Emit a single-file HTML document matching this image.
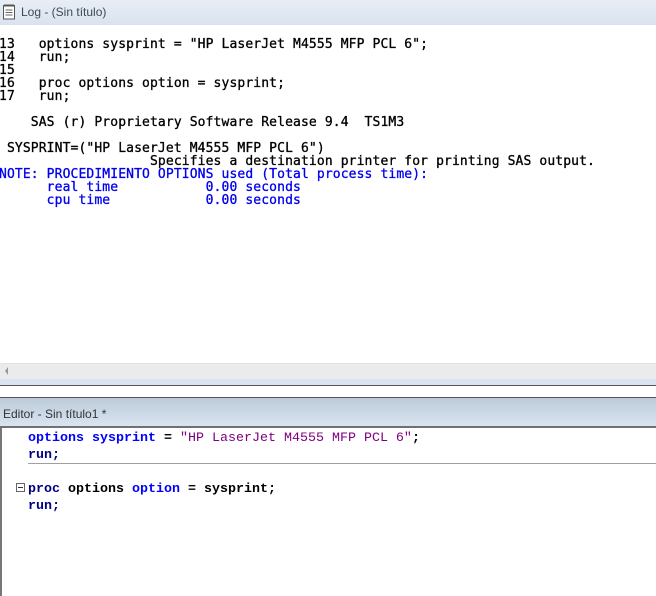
<!DOCTYPE html>
<html><head><meta charset="utf-8"><style>
*{margin:0;padding:0;box-sizing:border-box}
body{width:656px;height:596px;position:relative;background:#fff;overflow:hidden;font-family:"Liberation Sans",sans-serif}
.t{position:absolute;left:0;width:656px;background:linear-gradient(#eef2f7,#d6e2ef);color:#3c4a5a;font-size:12px}
.l{position:absolute;white-space:pre;font-family:"DejaVu Sans Mono",monospace;font-size:13px;letter-spacing:0.12px;line-height:13px;color:#000;-webkit-text-stroke:0.3px #000}
.b{color:#0000ee;-webkit-text-stroke:0.3px #0000ee}
.e{position:absolute;white-space:pre;font-family:"Liberation Mono","Courier New",monospace;font-size:13.33px;line-height:17px;color:#000;font-weight:bold}
.k{color:#0000ff}
.s{color:#800080;font-weight:normal}
.n{color:#000080}
</style></head><body>
<div class="t" style="top:0;height:25px;background:linear-gradient(#e9eef5,#d9e3ef)">
<svg style="position:absolute;left:2px;top:3px" width="14" height="17" viewBox="0 0 14 17"><rect x="1.5" y="2.5" width="11" height="13.5" fill="#fff" stroke="#555"/><path d="M3 1v3M5 1v3M7 1v3M9 1v3M11 1v3" stroke="#555"/><path d="M3.5 7h7M3.5 9.5h7M3.5 12h7" stroke="#666"/></svg>
<span style="position:absolute;left:21px;top:5px">Log - (Sin título)</span></div>
<div class="l" style="left:-1px;top:38px">13   options sysprint = "HP LaserJet M4555 MFP PCL 6";
14   run;
15
16   proc options option = sysprint;
17   run;</div>
<div class="l" style="left:-1px;top:116px">    SAS (r) Proprietary Software Release 9.4  TS1M3</div>
<div class="l" style="left:-1px;top:142px"> SYSPRINT=("HP LaserJet M4555 MFP PCL 6")
                   Specifies a destination printer for printing SAS output.
<span class="b">NOTE: PROCEDIMIENTO OPTIONS used (Total process time):
      real time           0.00 seconds
      cpu time            0.00 seconds</span></div>
<div style="position:absolute;left:0;top:363px;width:656px;height:16px;background:#ebebeb;border-top:1px solid #e2e2e2"></div>
<div style="position:absolute;left:5px;top:367px;width:0;height:0;border-top:4px solid transparent;border-bottom:4px solid transparent;border-right:3px solid #999"></div>
<div style="position:absolute;left:0;top:379px;width:656px;height:7px;background:#d9e4f0;border-bottom:1px solid #555"></div>
<div style="position:absolute;left:0;top:397px;width:656px;height:1px;background:#555"></div>
<div class="t" style="top:398px;height:30px;background:linear-gradient(#bccad8,#d8e4f0);border-bottom:2px solid #707070"><span style="position:absolute;left:3px;top:9px;color:#333">Editor - Sin título1 *</span></div>
<div style="position:absolute;left:0;top:428px;width:2px;height:168px;background:#777"></div>
<div class="e" style="left:28px;top:430px"><span class="k">options sysprint</span> = <span class="s">"HP LaserJet M4555 MFP PCL 6"</span>;
<span class="n">run;</span></div>
<div style="position:absolute;left:28px;top:463px;width:628px;height:1px;background:#a0a0a0"></div>
<div style="position:absolute;left:16px;top:483px;width:9px;height:9px;border:1px solid #666;background:#fff"></div>
<div style="position:absolute;left:18px;top:487px;width:5px;height:1px;background:#333"></div>
<div class="e" style="left:28px;top:481px"><span class="n">proc</span> options <span class="k">option</span> = sysprint;
<span class="n">run;</span></div>
</body></html>
